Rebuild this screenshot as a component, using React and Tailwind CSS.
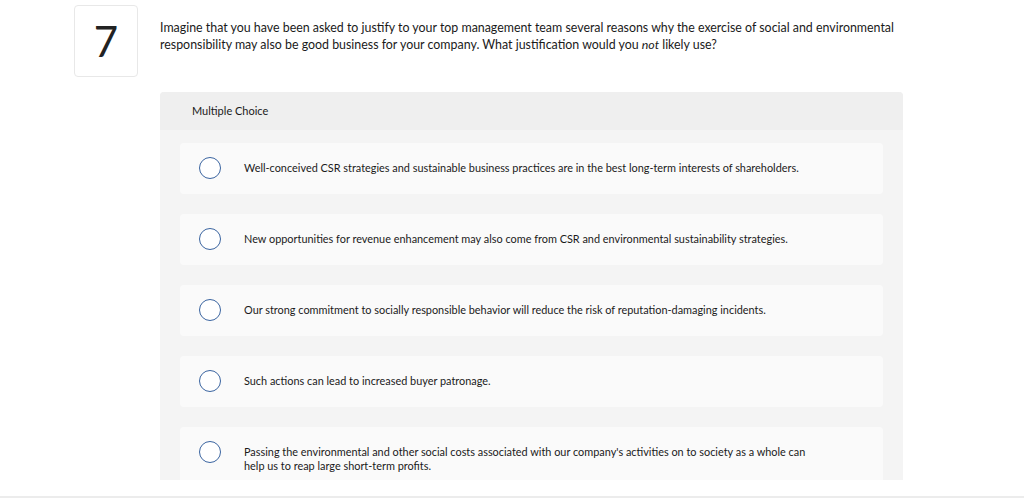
const options = [
  "Well-conceived CSR strategies and sustainable business practices are in the best long-term interests of shareholders.",
  "New opportunities for revenue enhancement may also come from CSR and environmental sustainability strategies.",
  "Our strong commitment to socially responsible behavior will reduce the risk of reputation-damaging incidents.",
  "Such actions can lead to increased buyer patronage.",
  "Passing the environmental and other social costs associated with our company's activities on to society as a whole can help us to reap large short-term profits.",
];

export default function App() {
  return (
    <div className="w-[1024px] h-[500px] bg-white overflow-hidden font-['Lato',sans-serif] text-[#1a1a1a]">
      <div className="flex h-[496px]">
        <div className="w-[74px]" />
        <div className="mt-[5px] w-[64px] h-[72px] border border-[#e8e8e8] rounded flex items-center justify-center text-[42px] text-[#222] leading-none">
          7
        </div>
        <div className="ml-[22px] w-[743px]">
          <p className="mt-[19px] text-[12.4px] leading-[17px]">
            Imagine that you have been asked to justify to your top management team several reasons why the exercise of social and environmental responsibility may also be good business for your company. What justification would you <i>not</i> likely use?
          </p>
          <div className="mt-[39px] h-[388px] overflow-hidden bg-[#f4f4f4] rounded-t">
            <div className="h-[38px] bg-[#efefef] flex items-center pl-[32px] text-[11px] pt-[1px]">
              Multiple Choice
            </div>
            <div className="pt-[13px] px-[20px] flex flex-col gap-[20px]">
              {options.map((text, i) => (
                <div
                  key={i}
                  className="min-h-[51px] bg-[#fafafa] rounded flex items-start"
                >
                  <div className="mt-[14px] w-[22px] h-[22px] rounded-full border border-[#3a64a0] bg-white ml-[19px] shrink-0" />
                  <p className="ml-[23px] pr-[70px] py-[18px] text-[10.9px] leading-[14px]">
                    {text}
                  </p>
                </div>
              ))}
            </div>
          </div>
        </div>
      </div>
      <div className="h-[2px] bg-[#ececec]" />
    </div>
  );
}
